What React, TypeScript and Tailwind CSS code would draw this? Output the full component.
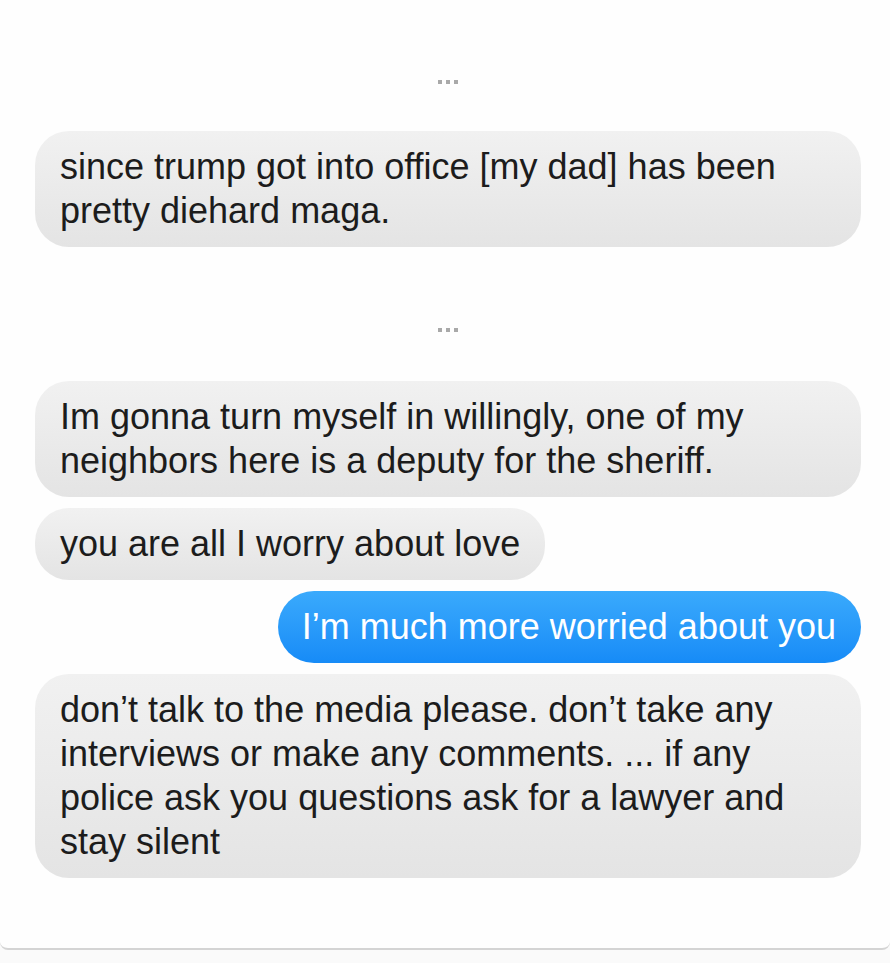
import type { ReactNode } from 'react'

const font = { fontFamily: '"Liberation Sans", Arial, Helvetica, sans-serif' }

function Dots() {
  return (
    <div className="flex justify-center gap-[4px] py-[10px]">
      <span className="w-[4px] h-[4px] bg-[#a9a9a9]" />
      <span className="w-[4px] h-[4px] bg-[#a9a9a9]" />
      <span className="w-[4px] h-[4px] bg-[#a9a9a9]" />
    </div>
  )
}

function Received({ children, full }: { children: ReactNode; full?: boolean }) {
  return (
    <div className="flex justify-start">
      <div
        className={`${full ? 'w-full' : ''} rounded-[34px] bg-gradient-to-b from-[#f1f1f1] to-[#e4e4e4] px-[25px] py-[14px] text-[36px] leading-[44px] text-[#1c1c1c]`}
      >
        {children}
      </div>
    </div>
  )
}

function Sent({ children }: { children: ReactNode }) {
  return (
    <div className="flex justify-end">
      <div className="rounded-[36px] bg-gradient-to-b from-[#3aaafc] to-[#168bf7] pl-[24px] pr-[25px] py-[14px] text-[36px] leading-[44px] text-white">
        {children}
      </div>
    </div>
  )
}

export default function App() {
  return (
    <div className="min-h-screen bg-[#fafafa]" style={font}>
      <div className="bg-[#fefefe] border-b-2 border-[#d4d4d4] rounded-b-[8px] h-[950px] pl-[35px] pr-[29px] pt-[70px]">
        <Dots />
        <div className="mt-[37px]">
          <Received full>
            since trump got into office [my dad] has been
            <br />
            pretty diehard maga.
          </Received>
        </div>
        <div className="mt-[71px]">
          <Dots />
        </div>
        <div className="mt-[39px] flex flex-col gap-[11px]">
          <Received full>
            Im gonna turn myself in willingly, one of my
            <br />
            neighbors here is a deputy for the sheriff.
          </Received>
          <Received>you are all I worry about love</Received>
          <Sent>I’m much more worried about you</Sent>
          <Received full>
            don’t talk to the media please. don’t take any
            <br />
            interviews or make any comments. ... if any
            <br />
            police ask you questions ask for a lawyer and
            <br />
            stay silent
          </Received>
        </div>
      </div>
    </div>
  )
}
